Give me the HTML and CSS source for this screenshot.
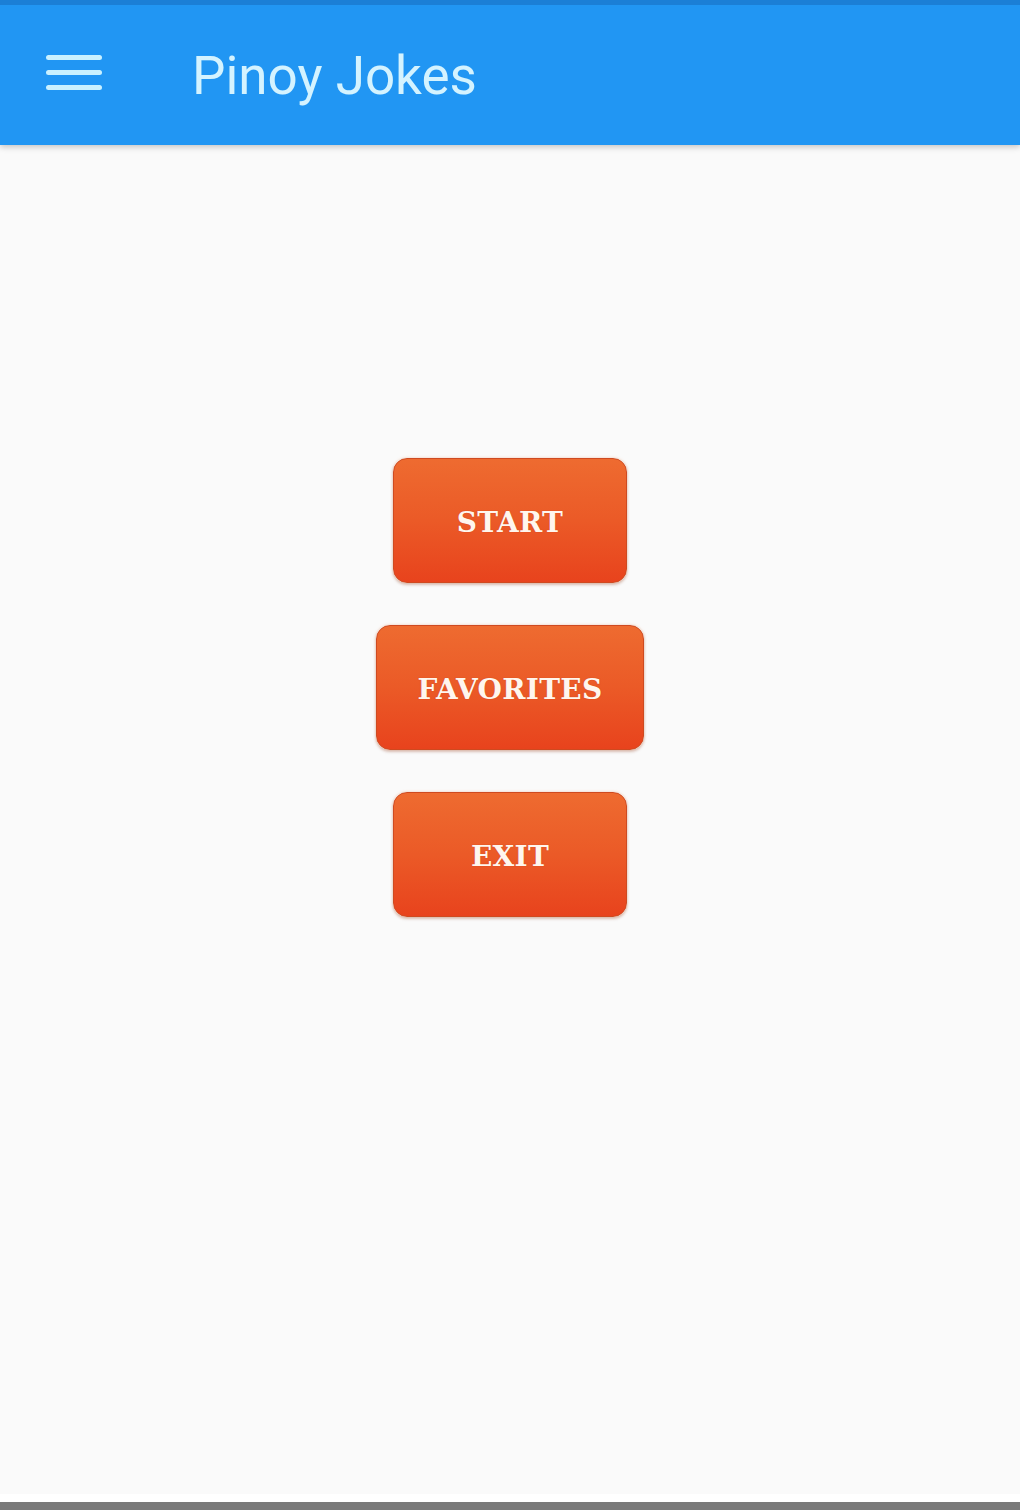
FILE: index.html
```html
<!DOCTYPE html>
<html>
<head>
<meta charset="utf-8">
<link rel="stylesheet" href="styles.css">
</head>
<body>
<div class="app">
  <header class="toolbar">
    <div class="menu-icon">
      <svg width="56" height="40" viewBox="0 0 56 40">
        <rect x="0" y="3" width="56" height="5" rx="2.5" fill="#c9f1ff"/>
        <rect x="0" y="18" width="56" height="5" rx="2.5" fill="#c9f1ff"/>
        <rect x="0" y="33" width="56" height="5" rx="2.5" fill="#c9f1ff"/>
      </svg>
    </div>
    <h1 class="title">Pinoy Jokes</h1>
  </header>
  <main class="content">
    <button class="btn">START</button>
    <button class="btn">FAVORITES</button>
    <button class="btn">EXIT</button>
  </main>
  <div class="bottom-edge"></div>
</div>
</body>
</html>
```
FILE: styles.css
```css
html, body {
  margin: 0;
  padding: 0;
  height: 100%;
}
body {
  background: #fafafa;
  font-family: Roboto, "Liberation Sans", sans-serif;
}
.app {
  height: 1510px;
  display: flex;
  flex-direction: column;
}
.toolbar {
  height: 140px;
  border-top: 5px solid #1b7fd6;
  background: #2196f3;
  display: flex;
  align-items: center;
  box-shadow: 0 2px 6px rgba(0,0,0,0.22);
  position: relative;
  z-index: 1;
  flex: none;
}
.menu-icon {
  width: 56px;
  height: 40px;
  margin-left: 46px;
  margin-right: 90px;
  margin-top: -6px;
}
.menu-icon svg { display: block; }
.title {
  margin: 0;
  margin-top: 2px;
  font-family: Roboto, "Liberation Sans", sans-serif;
  font-weight: 400;
  font-size: 53px;
  color: #d4f3ff;
  letter-spacing: 0;
}
.content {
  flex: 1;
  display: flex;
  flex-direction: column;
  align-items: center;
  padding-top: 313px;
  gap: 42px;
}
.btn {
  min-width: 234px;
  height: 125px;
  padding: 4px 40px 0;
  border: 1px solid #cf4a20;
  border-radius: 14px;
  background: linear-gradient(to bottom, #ee6b30 0%, #eb5a27 50%, #e8431d 100%);
  color: #fff6ee;
  font-family: "DejaVu Serif", serif;
  font-weight: 700;
  font-size: 28px;
  letter-spacing: 0.3px;
  box-shadow: 0 0 3px rgba(230,120,60,0.35), 0 2px 3px rgba(120,40,10,0.25);
  text-shadow: 0 0 1px rgba(160,40,10,0.5);
  cursor: pointer;
}
.bottom-edge {
  height: 8px;
  border-top: 8px solid #ffffff;
  background: #7a7a7a;
  flex: none;
}
```
